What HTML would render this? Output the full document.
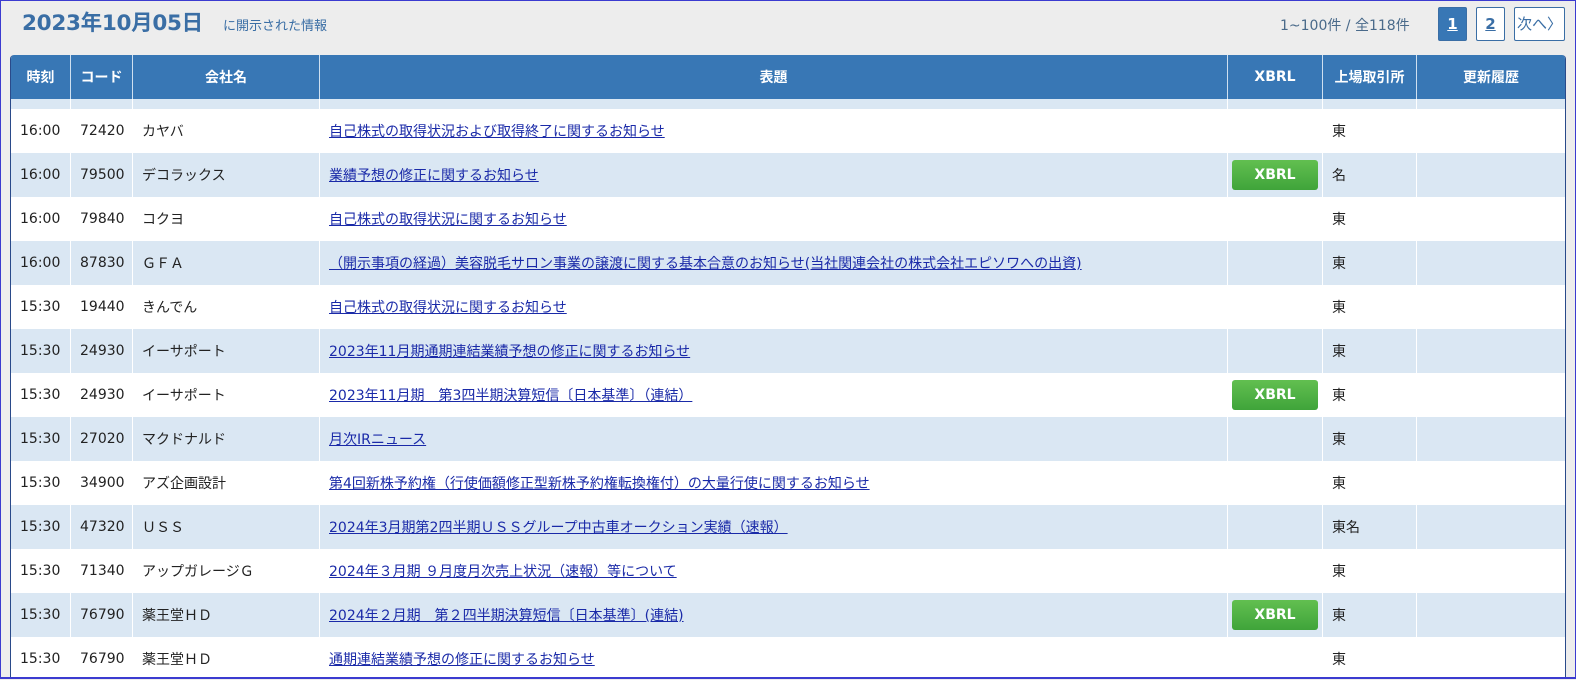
<!DOCTYPE html>
<html style="overflow:hidden;width:1576px;height:680px"><head><meta charset="utf-8"><style>
*{margin:0;padding:0;box-sizing:border-box}
html,body{width:1576px;height:680px;overflow:hidden}
body{background:#ededed;font-family:"DejaVu Sans","Noto Sans CJK JP",sans-serif;position:relative}
.frame{position:absolute;left:0;top:0;width:1576px;height:679px;border:1px solid #3b3bd0;border-bottom:2px solid #3b3bd0;pointer-events:none}
.title{position:absolute;left:22px;top:6px;font-size:21.5px;font-weight:bold;color:#3a6ea5;letter-spacing:-0.3px}
.sub{position:absolute;left:223px;top:15px;font-size:13px;color:#3a6ea5}
.cnt{position:absolute;left:1280px;top:15px;font-size:14px;color:#4a6a8a}
.pb{position:absolute;top:7px;height:34px;border:1px solid #3a6ea5;background:#fff;color:#3a6ea5;font-size:15px;font-weight:bold;text-align:center;line-height:32px;border-radius:2px}
.tbl{position:absolute;left:10px;top:55px;width:1556px;border-left:1px solid #2a4a8a;border-right:1px solid #2a4a8a;height:623px;background:#fff;overflow:hidden;border-radius:4px 4px 0 0}
.r{display:flex;height:44px;align-items:center}
.r>div{height:100%;display:flex;align-items:center;padding-left:9px;border-left:1px solid #fff;white-space:nowrap;overflow:hidden;font-size:14px;color:#222}
.r>div:first-child{border-left:none}
.h{height:44px;background:#3877b5}
.h>div{justify-content:center;padding-left:0!important;color:#fff!important;font-weight:bold;border-left-color:#cfe0f0!important}
.sp{height:10px;background:#dae7f3}
.b{background:#dae7f3}
.c1{width:59px}.c2{width:62px}.c3{width:187px}.c4{width:908px}.c5{width:95px}.c6{width:94px}.c7{flex:1}
a{color:#1a2aa8;text-decoration:underline}
.x{display:inline-block;width:86px;height:30px;margin-left:-5px;background:linear-gradient(#62bf50,#3fa43a);border-radius:3px;color:#fff;font-weight:bold;text-align:center;line-height:30px;font-size:14px}
</style></head><body>
<div class="title">2023年10月05日</div>
<div class="sub">に開示された情報</div>
<div class="cnt">1~100件 / 全118件</div>
<div class="pb" style="left:1438px;width:29px;background:#3877b5;color:#fff;text-decoration:underline">1</div>
<div class="pb" style="left:1476px;width:29px;text-decoration:underline">2</div>
<div class="pb" style="left:1514px;width:51px;font-weight:normal;font-size:15px">次へ〉</div>
<div class="tbl">
<div class="r h"><div class="c1">時刻</div><div class="c2">コード</div><div class="c3">会社名</div><div class="c4">表題</div><div class="c5">XBRL</div><div class="c6">上場取引所</div><div class="c7">更新履歴</div></div>
<div class="r sp"><div class="c1"></div><div class="c2"></div><div class="c3"></div><div class="c4"></div><div class="c5"></div><div class="c6"></div><div class="c7"></div></div>
<div class="r"><div class="c1">16:00</div><div class="c2">72420</div><div class="c3">カヤバ</div><div class="c4"><a>自己株式の取得状況および取得終了に関するお知らせ</a></div><div class="c5"></div><div class="c6">東</div><div class="c7"></div></div>
<div class="r b"><div class="c1">16:00</div><div class="c2">79500</div><div class="c3">デコラックス</div><div class="c4"><a>業績予想の修正に関するお知らせ</a></div><div class="c5"><span class="x">XBRL</span></div><div class="c6">名</div><div class="c7"></div></div>
<div class="r"><div class="c1">16:00</div><div class="c2">79840</div><div class="c3">コクヨ</div><div class="c4"><a>自己株式の取得状況に関するお知らせ</a></div><div class="c5"></div><div class="c6">東</div><div class="c7"></div></div>
<div class="r b"><div class="c1">16:00</div><div class="c2">87830</div><div class="c3">ＧＦＡ</div><div class="c4"><a>（開示事項の経過）美容脱毛サロン事業の譲渡に関する基本合意のお知らせ(当社関連会社の株式会社エピソワへの出資)</a></div><div class="c5"></div><div class="c6">東</div><div class="c7"></div></div>
<div class="r"><div class="c1">15:30</div><div class="c2">19440</div><div class="c3">きんでん</div><div class="c4"><a>自己株式の取得状況に関するお知らせ</a></div><div class="c5"></div><div class="c6">東</div><div class="c7"></div></div>
<div class="r b"><div class="c1">15:30</div><div class="c2">24930</div><div class="c3">イーサポート</div><div class="c4"><a>2023年11月期通期連結業績予想の修正に関するお知らせ</a></div><div class="c5"></div><div class="c6">東</div><div class="c7"></div></div>
<div class="r"><div class="c1">15:30</div><div class="c2">24930</div><div class="c3">イーサポート</div><div class="c4"><a>2023年11月期　第3四半期決算短信〔日本基準〕（連結）</a></div><div class="c5"><span class="x">XBRL</span></div><div class="c6">東</div><div class="c7"></div></div>
<div class="r b"><div class="c1">15:30</div><div class="c2">27020</div><div class="c3">マクドナルド</div><div class="c4"><a>月次IRニュース</a></div><div class="c5"></div><div class="c6">東</div><div class="c7"></div></div>
<div class="r"><div class="c1">15:30</div><div class="c2">34900</div><div class="c3">アズ企画設計</div><div class="c4"><a>第4回新株予約権（行使価額修正型新株予約権転換権付）の大量行使に関するお知らせ</a></div><div class="c5"></div><div class="c6">東</div><div class="c7"></div></div>
<div class="r b"><div class="c1">15:30</div><div class="c2">47320</div><div class="c3">ＵＳＳ</div><div class="c4"><a>2024年3月期第2四半期ＵＳＳグループ中古車オークション実績（速報）</a></div><div class="c5"></div><div class="c6">東名</div><div class="c7"></div></div>
<div class="r"><div class="c1">15:30</div><div class="c2">71340</div><div class="c3">アップガレージＧ</div><div class="c4"><a>2024年３月期 ９月度月次売上状況（速報）等について</a></div><div class="c5"></div><div class="c6">東</div><div class="c7"></div></div>
<div class="r b"><div class="c1">15:30</div><div class="c2">76790</div><div class="c3">薬王堂ＨＤ</div><div class="c4"><a>2024年２月期　第２四半期決算短信〔日本基準〕(連結)</a></div><div class="c5"><span class="x">XBRL</span></div><div class="c6">東</div><div class="c7"></div></div>
<div class="r"><div class="c1">15:30</div><div class="c2">76790</div><div class="c3">薬王堂ＨＤ</div><div class="c4"><a>通期連結業績予想の修正に関するお知らせ</a></div><div class="c5"></div><div class="c6">東</div><div class="c7"></div></div>
</div>
<div class="frame"></div>
</body></html>
